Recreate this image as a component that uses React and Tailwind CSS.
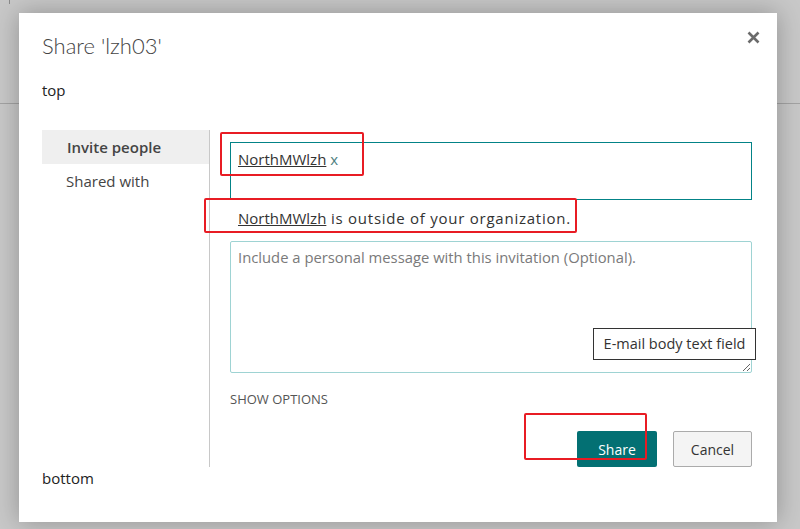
export default function App() {
    const font = { fontFamily: '"Open Sans", "Noto Sans", sans-serif' };

    return (
        <div className="relative w-[800px] h-[529px] overflow-hidden bg-[#c8c8c8]" style={font}>
            {/* page behind the overlay */}
            <div className="absolute left-[9px] top-0 w-px h-[4px] bg-[#8a8a8a]" />
            <div className="absolute left-0 right-0 top-[103px] h-px bg-[#a3a3a3]" />

            <div className="relative pt-[13px] pl-[19px]">
                {/* Dialog */}
                <div className="relative w-[758px] h-[509px] bg-white shadow-[0_0_24px_rgba(0,0,0,0.28)] pl-[23px] pr-[25px] flex flex-col">
                    <button className="absolute right-[17px] top-[17px] w-[14px] h-[14px] flex items-center justify-center">
                        <svg width="13" height="13" viewBox="0 0 13 13">
                            <path d="M1.5 1.5 L11.5 11.5 M11.5 1.5 L1.5 11.5" stroke="#6b6b6b" strokeWidth="2.6" />
                        </svg>
                    </button>

                    <h1
                        className="pt-[17px] text-[22px] leading-[32px] font-light text-[#444]"
                        style={{ fontFamily: 'Lato, "Open Sans", sans-serif' }}
                    >
                        Share 'lzh03'
                    </h1>
                    <div className="mt-[18px] text-[15px] leading-[20px] text-[#222]">top</div>

                    {/* Body */}
                    <div className="mt-[30px] flex">
                        <nav className="w-[168px] border-r border-[#c8c8c8] flex flex-col">
                            <div className="h-[34px] bg-[#efefef] pl-[25px] flex items-center text-[15px] font-semibold text-[#444]">
                                Invite people
                            </div>
                            <div className="h-[34px] pl-[24px] flex items-center text-[15px] text-[#444]">
                                Shared with
                            </div>
                        </nav>

                        <div className="pl-[20px] pt-[12px] w-[542px]">
                            <div className="h-[58px] border border-[#038387] px-[7px] pt-[5px] text-[15px] leading-[22px]">
                                <span className="underline text-[#333]">NorthMWlzh</span>
                                <span className="text-[#4d7f80]"> x</span>
                            </div>
                            <div className="mt-[8px] pl-[8px] text-[15px] leading-[20px] text-[#333]">
                                <span className="underline">NorthMWlzh</span>
                                <span className="tracking-[0.75px]"> is outside of your organization.</span>
                            </div>
                            <textarea
                                className="mt-[13px] block w-full h-[132px] border border-[#9ed3d3] rounded-[2px] px-[7px] py-[4px] text-[14.8px] leading-[22px] outline-none placeholder:text-[#7a7a7a]"
                                placeholder="Include a personal message with this invitation (Optional)."
                            />
                            <div className="mt-[18px] text-[13px] leading-[16px] text-[#555]">SHOW OPTIONS</div>
                            <div className="mt-[24px] flex justify-end gap-[16px]">
                                <button className="w-[80px] h-[36px] rounded-[2px] bg-[#037073] text-white text-[14px]">Share</button>
                                <button className="w-[79px] h-[36px] rounded-[2px] bg-[#f4f4f4] border border-[#ababab] text-[#333] text-[14px]">Cancel</button>
                            </div>
                        </div>
                    </div>

                    <div className="mt-[1px] text-[15px] leading-[20px] text-[#222]">bottom</div>
                </div>
            </div>

            {/* tooltip over the textarea */}
            <div className="absolute left-[593px] top-[328px] w-[163px] h-[32px] bg-white border border-[#333] flex items-center justify-center text-[14.5px] text-[#333]">
                E-mail body text field
            </div>

            {/* red annotation boxes */}
            <div className="absolute left-[220px] top-[132px] w-[144px] h-[44px] border-2 border-[#e81c24] rounded-[2px]" />
            <div className="absolute left-[204px] top-[198px] w-[373px] h-[35px] border-2 border-[#e81c24] rounded-[2px]" />
            <div className="absolute left-[524px] top-[413px] w-[123px] h-[47px] border-2 border-[#e81c24] rounded-[2px]" />
        </div>
    );
}
